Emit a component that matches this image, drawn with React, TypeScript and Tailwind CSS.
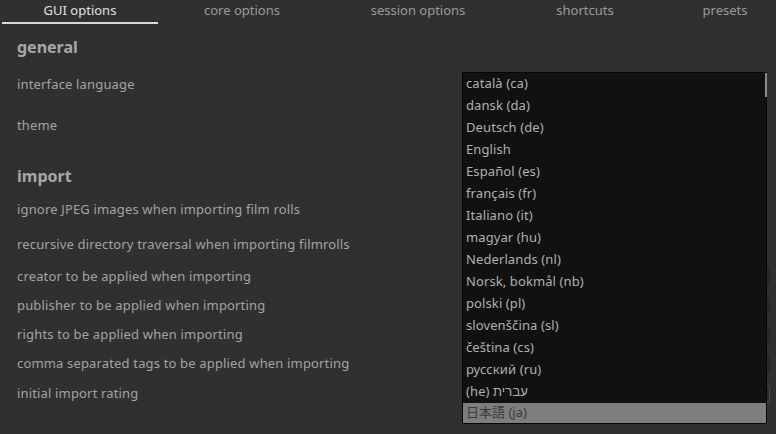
import React from "react";

const tabs = [
  { label: "GUI options", cls: "w-[160px]", active: true },
  { label: "core options", cls: "w-[164px]", active: false },
  { label: "session options", cls: "w-[188px]", active: false },
  { label: "shortcuts", cls: "w-[146px]", active: false },
  { label: "presets", cls: "flex-1 pl-[16px]", active: false },
];

const langs = [
  "català (ca)",
  "dansk (da)",
  "Deutsch (de)",
  "English",
  "Español (es)",
  "français (fr)",
  "Italiano (it)",
  "magyar (hu)",
  "Nederlands (nl)",
  "Norsk, bokmål (nb)",
  "polski (pl)",
  "slovenščina (sl)",
  "čeština (cs)",
  "русский (ru)",
  "(he) עברית",
];

function Row({ label, h, field, fieldCls }: { label: string; h: string; field?: boolean; fieldCls?: string }) {
  return (
    <div className={`flex items-center justify-between ${h}`}>
      <span className="text-[13px] tracking-[0.16px] text-[#a3a3a3]">{label}</span>
      {field ? (
        <div className={`w-[308px] h-[18px] rounded-[3px] bg-[#2a2a2a] border ${fieldCls ?? "border-[#262626]"}`} />
      ) : null}
    </div>
  );
}

export default function App() {
  return (
    <div
      className="relative w-[776px] h-[434px] bg-[#303030] overflow-hidden"
      style={{ fontFamily: "'Noto Sans', 'Noto Sans CJK JP', sans-serif" }}
    >
      <div className="flex h-[24px]">
        {tabs.map((t) => (
          <div key={t.label} className={`${t.cls} flex flex-col items-stretch`}>
            <div className={`flex-1 flex items-center justify-center text-[13px] ${t.active ? "text-[#e0e0e0]" : "text-[#9a9a9a]"}`}>
              {t.label}
            </div>
            <div className={`h-[2px] mx-[2px] ${t.active ? "bg-[#d8d8d8]" : "bg-transparent"}`} />
          </div>
        ))}
      </div>
      <div className="pl-[17px] pr-[6px] flex flex-col">
        <div className="h-[46px] flex items-center text-[16px] font-bold text-[#a8a8a8]">general</div>
        <Row label="interface language" h="h-[30px]" />
        <div className="h-[12px]" />
        <Row label="theme" h="h-[28px]" />
        <div className="h-[23px]" />
        <div className="h-[26px] flex items-center text-[16px] font-bold text-[#a8a8a8]">import</div>
        <div className="h-[6px]" />
        <Row label="ignore JPEG images when importing film rolls" h="h-[30px]" />
        <div className="h-[5px]" />
        <Row label="recursive directory traversal when importing filmrolls" h="h-[30px]" />
        <div className="h-[3px]" />
        <Row label="creator to be applied when importing" h="h-[28px]" field />
        <Row label="publisher to be applied when importing" h="h-[30px]" field />
        <Row label="rights to be applied when importing" h="h-[28px]" field />
        <Row label="comma separated tags to be applied when importing" h="h-[30px]" field />
        <Row label="initial import rating" h="h-[30px]" field fieldCls="border-[#4a4a4a]" />
      </div>

      <div className="absolute left-[462px] top-[72px] w-[305px] bg-[#111111] border border-[#050505]">
        {langs.map((l) => (
          <div key={l} className="h-[22px] flex items-center pl-[3px] text-[13px] tracking-[0.1px] text-[#b0b0b0]">
            <span dir="ltr">{l}</span>
          </div>
        ))}
        <div className="h-[20px] flex items-center pl-[3px] text-[13px] text-[#3c3c3c] bg-[#7e7e7e]">日本語 (ja)</div>
        <div className="absolute right-[-1px] top-[0px] w-[2px] h-[24px] bg-[#8a8a8a]" />
      </div>
    </div>
  );
}
